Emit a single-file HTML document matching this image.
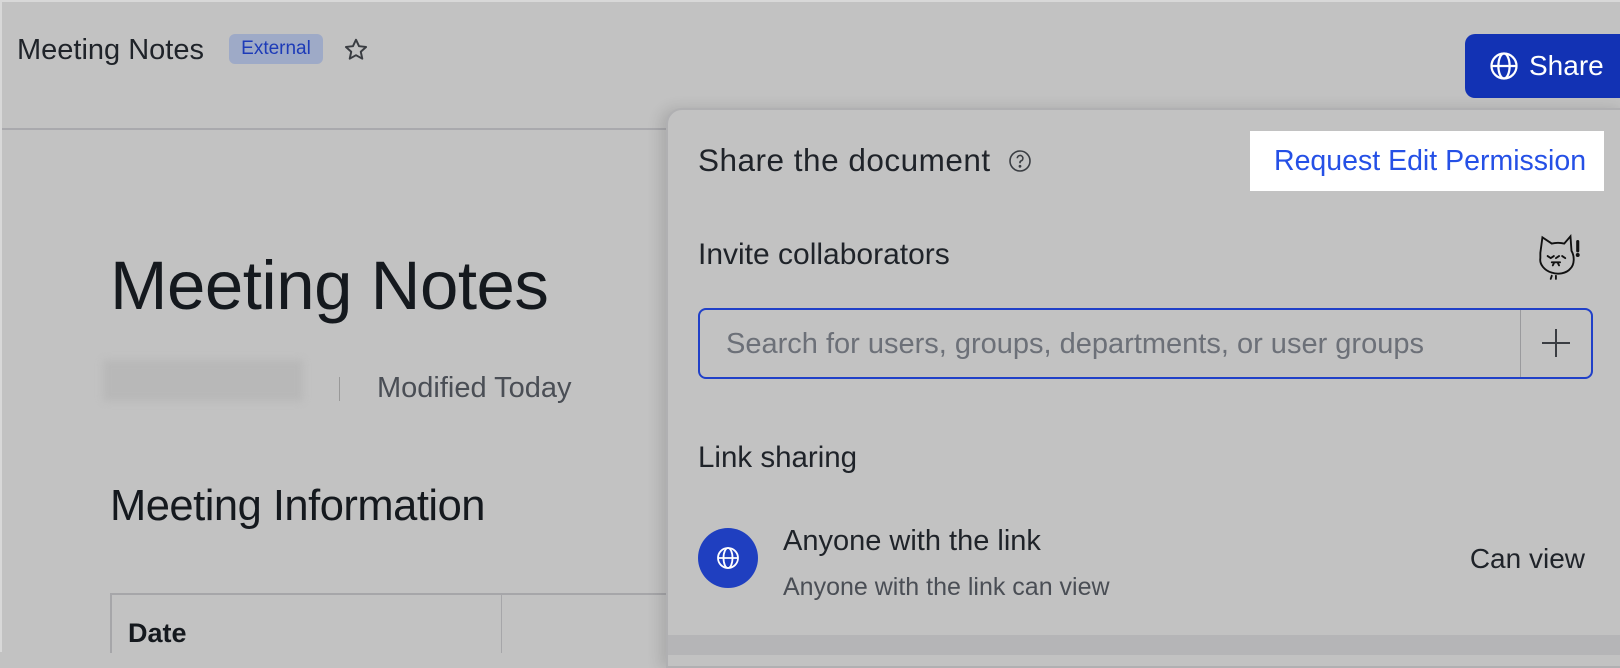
<!DOCTYPE html>
<html><head><style>
*{margin:0;padding:0;box-sizing:border-box}
body{width:1620px;height:652px;overflow:hidden;background:#c2c2c2;font-family:"Liberation Sans",sans-serif;position:relative;color:#1f2329}
.a{position:absolute;white-space:nowrap}
</style></head><body>
<div class="a" style="left:0;top:0;width:1620px;height:2px;background:#d8d8d8"></div>
<div class="a" style="left:0;top:0;width:2px;height:652px;background:#d8d8d8"></div>
<div class="a" style="left:17px;top:33px;font-size:29px;line-height:34px;color:#1f2329">Meeting Notes</div>
<div class="a" style="left:229px;top:34px;width:94px;height:30px;border-radius:6px;background:#9eaac7;color:#1d3bb8;font-size:19px;line-height:30px;text-align:center">External</div>
<svg class="a" style="left:343px;top:37px" width="26" height="26" viewBox="0 0 24 24"><path d="M12 2.5l2.8 6 6.5.7-4.9 4.4 1.4 6.4L12 16.8 6.2 20l1.4-6.4L2.7 9.2l6.5-.7z" fill="none" stroke="#3a3d42" stroke-width="1.8" stroke-linejoin="round"/></svg>
<div class="a" style="left:2px;top:128px;width:680px;height:2px;background:#a9a9ad"></div>
<div class="a" style="left:1465px;top:34px;width:160px;height:64px;border-radius:10px 0 0 10px;background:#1232b4;color:#fff;font-size:28px;line-height:64px;padding-left:64px">Share</div>
<svg class="a" style="left:1489px;top:51px" width="30" height="30" viewBox="0 0 24 24" fill="none" stroke="#fff" stroke-width="1.8"><circle cx="12" cy="12" r="10"/><ellipse cx="12" cy="12" rx="4.5" ry="10"/><path d="M2 12h20"/></svg>

<div class="a" style="left:110px;top:246px;font-size:69px;line-height:80px;color:#15191e;letter-spacing:-0.5px">Meeting Notes</div>
<div class="a" style="left:103px;top:360px;width:200px;height:41px;background:#b8b8b8;filter:blur(4px)"></div>
<div class="a" style="left:339px;top:377px;width:1px;height:24px;background:#999"></div>
<div class="a" style="left:377px;top:371px;font-size:29px;line-height:34px;color:#4a4e55">Modified Today</div>
<div class="a" style="left:110px;top:480px;font-size:43.5px;line-height:52px;color:#15191e;letter-spacing:-0.5px">Meeting Information</div>
<div class="a" style="left:110px;top:593px;width:560px;height:2px;background:#a6a6a9"></div>
<div class="a" style="left:110px;top:593px;width:2px;height:60px;background:#a6a6a9"></div>
<div class="a" style="left:501px;top:593px;width:1px;height:60px;background:#a6a6a9"></div>
<div class="a" style="left:128px;top:617px;font-size:27px;font-weight:bold;line-height:32px;color:#15191e">Date</div>

<div class="a" style="left:666px;top:108px;width:960px;height:560px;border-radius:16px 0 0 0;background:#c2c2c2;border:2px solid #b0b0b2;box-shadow:-6px 0 14px rgba(0,0,0,0.12)"></div>
<div class="a" style="left:668px;top:635px;width:952px;height:20px;background:#b5b5b7"></div>
<div class="a" style="left:698px;top:142px;font-size:31.5px;line-height:36px;letter-spacing:0.5px;color:#1f2329">Share the document</div>
<svg class="a" style="left:1008px;top:149px" width="24" height="24" viewBox="0 0 24 24" fill="none" stroke="#3a3d42" stroke-width="1.6"><circle cx="12" cy="12" r="10"/><path d="M9.3 9.3a2.8 2.8 0 1 1 3.8 2.6c-.7.3-1.1.9-1.1 1.6v.8"/><circle cx="12" cy="17.3" r=".6" fill="#3a3d42"/></svg>
<div class="a" style="left:1250px;top:131px;width:354px;height:60px;background:#fff"></div>
<div class="a" style="left:1274px;top:144px;font-size:28.5px;line-height:34px;color:#2550e6">Request Edit Permission</div>
<div class="a" style="left:698px;top:237px;font-size:30px;line-height:36px;color:#1f2329">Invite collaborators</div>
<svg class="a" style="left:1531px;top:228px" width="54" height="54" viewBox="0 0 52 52" fill="none" stroke="#111" stroke-width="1.8" stroke-linecap="round"><path d="M9 24l2-15 9 6c4-1 8-1 12 0l6-7 1 14c3 5 3 13-1 17-4 5-12 6-18 4-7-2-12-8-11-14z"/><path d="M16 27l3 2M22 27l-3 2M27 27l-3 2M30 27l3 2M20 33h8M22 34l-1 2M26 34l1 2"/><path d="M45 13v9" stroke-width="3"/><circle cx="45" cy="26" r="1" fill="#111"/><path d="M20 46l-1 3M24 46v3"/></svg>
<div class="a" style="left:698px;top:308px;width:895px;height:71px;border:2px solid #2040c8;border-radius:8px"></div>
<div class="a" style="left:1520px;top:310px;width:1px;height:67px;background:#9a9a9d"></div>
<div class="a" style="left:726px;top:327px;font-size:29px;line-height:34px;color:#6c7078">Search for users, groups, departments, or user groups</div>
<div class="a" style="left:1542px;top:342px;width:28px;height:2px;background:#3a3d42"></div>
<div class="a" style="left:1555px;top:329px;width:2px;height:28px;background:#3a3d42"></div>
<div class="a" style="left:698px;top:440px;font-size:29.5px;line-height:36px;color:#1f2329">Link sharing</div>
<div class="a" style="left:698px;top:528px;width:60px;height:60px;border-radius:50%;background:#1f3fc0"></div>
<svg class="a" style="left:716px;top:546px" width="24" height="24" viewBox="0 0 24 24" fill="none" stroke="#fff" stroke-width="1.8"><circle cx="12" cy="12" r="10"/><ellipse cx="12" cy="12" rx="4.5" ry="10"/><path d="M2 12h20"/></svg>
<div class="a" style="left:783px;top:524px;font-size:29px;line-height:34px;color:#1f2329">Anyone with the link</div>
<div class="a" style="left:783px;top:572px;font-size:25px;line-height:30px;color:#4a4e55">Anyone with the link can view</div>
<div class="a" style="left:1440px;top:542px;width:145px;text-align:right;font-size:28px;line-height:34px;color:#1f2329">Can view</div>
</body></html>
